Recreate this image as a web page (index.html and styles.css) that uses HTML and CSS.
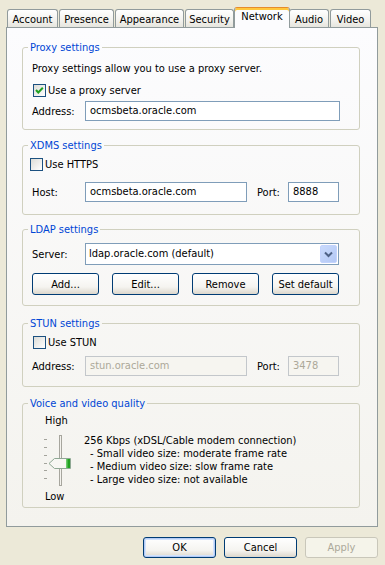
FILE: index.html
```html
<!DOCTYPE html>
<html>
<head>
<meta charset="utf-8">
<title>Network settings</title>
<link rel="stylesheet" href="styles.css">
</head>
<body>
<div class="window">
  <div class="tabs">
    <div class="tab t-account">Account</div>
    <div class="tab t-presence">Presence</div>
    <div class="tab t-appearance">Appearance</div>
    <div class="tab t-security">Security</div>
    <div class="tab t-network active">Network</div>
    <div class="tab t-audio">Audio</div>
    <div class="tab t-video">Video</div>
  </div>
  <div class="panel">
    <fieldset class="group proxy">
      <legend>Proxy settings</legend>
      <div class="inner">
        <p class="desc">Proxy settings allow you to use a proxy server.</p>
        <div class="check"><span class="box"><svg width="11" height="11" viewBox="0 0 11 11"><polyline points="2,5 4.3,7.5 8.8,2.8" fill="none" stroke="#21A121" stroke-width="2"/></svg></span><span>Use a proxy server</span></div>
        <div class="row"><span class="lbl">Address:</span><div class="input w-full">ocmsbeta.oracle.com</div></div>
      </div>
    </fieldset>
    <fieldset class="group xdms">
      <legend>XDMS settings</legend>
      <div class="inner">
        <div class="check shift"><span class="box"></span><span>Use HTTPS</span></div>
        <div class="row"><span class="lbl">Host:</span><div class="input w-host">ocmsbeta.oracle.com</div><span class="port-lbl">Port:</span><div class="input w-port">8888</div></div>
      </div>
    </fieldset>
    <fieldset class="group ldap">
      <legend>LDAP settings</legend>
      <div class="inner">
        <div class="row"><span class="lbl">Server:</span><div class="select"><span class="sel-text">ldap.oracle.com (default)</span><span class="arrow"><svg width="9" height="7" viewBox="0 0 9 7"><polyline points="1,1.5 4.5,5 8,1.5" fill="none" stroke="#4D6185" stroke-width="2"/></svg></span></div></div>
        <div class="btn-grid">
          <button class="btn">Add...</button>
          <button class="btn">Edit...</button>
          <button class="btn">Remove</button>
          <button class="btn">Set default</button>
        </div>
      </div>
    </fieldset>
    <fieldset class="group stun">
      <legend>STUN settings</legend>
      <div class="inner">
        <div class="check"><span class="box"></span><span>Use STUN</span></div>
        <div class="row"><span class="lbl">Address:</span><div class="input w-host disabled">stun.oracle.com</div><span class="port-lbl">Port:</span><div class="input w-port disabled">3478</div></div>
      </div>
    </fieldset>
    <fieldset class="group voice">
      <legend>Voice and video quality</legend>
      <div class="inner voice-inner">
        <div class="slider-col">
          <div class="slider-lbl">High</div>
          <svg class="slider" width="42" height="63" viewBox="0 0 42 63">
            <g stroke="#A3A39B" stroke-width="1">
              <line x1="2" y1="12.5" x2="5" y2="12.5"/>
              <line x1="2" y1="20.5" x2="5" y2="20.5"/>
              <line x1="2" y1="28.5" x2="5" y2="28.5"/>
              <line x1="2" y1="36.5" x2="5" y2="36.5"/>
              <line x1="2" y1="43.5" x2="5" y2="43.5"/>
              <line x1="2" y1="51.5" x2="5" y2="51.5"/>
            </g>
            <rect x="17.5" y="8.5" width="2" height="50" fill="#F4F3EE" stroke="#A7A69E"/>
            <polygon points="7,36.5 12.5,31.5 28.5,31.5 28.5,41.5 12.5,41.5" fill="#F7F7F3" stroke="#8FA894"/>
            <rect x="24" y="32" width="4" height="9" fill="#21A121"/>
            <rect x="24" y="32" width="1.5" height="9" fill="#6BCB6B"/>
          </svg>
          <div class="slider-lbl">Low</div>
        </div>
        <div class="quality">
          <p>256 Kbps (xDSL/Cable modem connection)</p>
          <p class="sub">- Small video size: moderate frame rate</p>
          <p class="sub">- Medium video size: slow frame rate</p>
          <p class="sub">- Large video size: not available</p>
        </div>
      </div>
    </fieldset>
  </div>
  <div class="actions">
    <button class="btn act default">OK</button>
    <button class="btn act">Cancel</button>
    <button class="btn act" disabled>Apply</button>
  </div>
</div>
</body>
</html>
```

FILE: styles.css
```css
* { box-sizing: border-box; }
html, body { margin: 0; padding: 0; }
body {
  width: 385px;
  height: 565px;
  overflow: hidden;
  background: #ECE9D8;
  font-family: "DejaVu Sans Condensed", "Liberation Sans", sans-serif;
  font-size: 11px;
  line-height: 13px;
  color: #000;
}
.window { padding: 7px 7px 0 6px; }

/* tabs */
.tabs {
  display: flex;
  align-items: flex-end;
  height: 20px;
  padding-left: 1px;
}
.tab {
  height: 18px;
  padding: 3px 0 0;
  margin-right: 1px;
  border: 1px solid #919B9C;
  border-bottom: none;
  border-radius: 3px 3px 0 0;
  background: linear-gradient(#FFFFFF, #F3F2EE 60%, #E6E5DE);
  white-space: nowrap;
  text-align: center;
}
.t-account { width: 51px; }
.t-presence { width: 55px; }
.t-appearance { width: 69px; }
.t-security { width: 49px; }
.t-network { width: 56px; }
.t-audio { width: 40px; }
.t-video { width: 41px; }
.tab.active {
  position: relative;
  z-index: 1;
  height: 21px;
  padding-top: 2px;
  margin: 0 -1px -1px -1px;
  background: #FCFCFE;
  border-top: 1px solid #E68B2C;
  box-shadow: inset 0 2px 0 #FFC73C;
}

/* panel */
.panel {
  height: 500px;
  border: 1px solid #919B9C;
  background: linear-gradient(#FCFCFE, #F4F3EE);
  padding: 13px 17px 0 15px;
}
.group {
  margin: 0;
  padding: 0;
  min-width: 0;
  border: 1px solid #D0D0BF;
  border-radius: 3px;
}
.group legend {
  color: #0046D5;
  padding: 0 2px;
  margin-left: 5px;
  line-height: 13px;
}
.inner { padding-left: 9px; }
.desc { margin: 0; }

.check {
  display: flex;
  align-items: center;
  gap: 2px;
  height: 13px;
  padding-left: 1px;
}
.check.shift { padding-left: 0; margin-left: -2px; }
.box {
  width: 13px;
  height: 13px;
  border: 1px solid #1C5180;
  background: linear-gradient(135deg, #DCDCD7, #FFFFFF);
  display: flex;
  align-items: center;
  justify-content: center;
}

.row { display: flex; align-items: center; }
.lbl { width: 53px; }
.input {
  height: 20px;
  border: 1px solid #7F9DB9;
  background: #FFFFFF;
  padding: 0 4px;
  line-height: 18px;
  white-space: nowrap;
}
.input.disabled {
  background: #F6F5F0;
  border-color: #C3C7CB;
  color: #ACA899;
}
.w-full { width: 255px; }
.w-host { width: 162px; }
.w-port { width: 51px; }
.port-lbl { margin-left: 10px; width: 31px; }

.select {
  display: flex;
  width: 254px;
  height: 22px;
  border: 1px solid #7F9DB9;
  background: #FFFFFF;
  padding: 1px;
}
.sel-text { flex: 1; padding-left: 2px; line-height: 18px; }
.arrow {
  width: 17px;
  border: 1px solid #C3D3FD;
  border-radius: 2px;
  background: linear-gradient(135deg, #C9DAFC, #B3C8F5);
  display: flex;
  align-items: center;
  justify-content: center;
}

.btn {
  font: inherit;
  color: #000;
  height: 22px;
  padding: 0;
  border: 1px solid #003C74;
  border-radius: 3px;
  background: linear-gradient(#FFFFFF, #F5F4F0 65%, #DCD7CC);
}
.btn-grid {
  display: grid;
  grid-template-columns: repeat(4, 1fr);
  column-gap: 13px;
  width: 307px;
}

/* per-group vertical rhythm */
.proxy .desc { margin-top: 8px; }
.proxy .check { margin-top: 9px; }
.proxy .row { margin-top: 4px; }
.proxy .inner { padding-bottom: 8px; }

.xdms { margin-top: 9px; }
.xdms .check { margin-top: 6px; }
.xdms .row { margin-top: 11px; }
.xdms .inner { padding-bottom: 12px; }

.ldap { margin-top: 8px; }
.ldap .row { margin-top: 7px; }
.ldap .btn-grid { margin-top: 8px; }
.ldap .inner { padding-bottom: 10px; }

.stun { margin-top: 11px; }
.stun .check { margin-top: 6px; }
.stun .row { margin-top: 7px; }
.stun .inner { padding-bottom: 10px; }

.voice { margin-top: 10px; }
.voice-inner {
  display: flex;
  padding-left: 19px;
  padding-bottom: 4px;
}
.slider-col { width: 42px; padding-top: 4px; }
.slider-lbl { padding-left: 3px; }
.slider { display: block; }
.quality { padding-top: 24px; }
.quality p { margin: 0; }
.quality .sub { padding-left: 6px; }

/* dialog buttons */
.actions {
  display: flex;
  justify-content: flex-end;
  gap: 8px;
  margin-top: 10px;
}
.act { width: 73px; height: 21px; }
.default {
  box-shadow: inset 0 0 0 1px #B4CBF6, inset 0 0 0 2px #D2E3FC;
}
.btn:disabled {
  border-color: #C9C7BA;
  background: #F5F4EA;
  color: #ACA899;
}
```
